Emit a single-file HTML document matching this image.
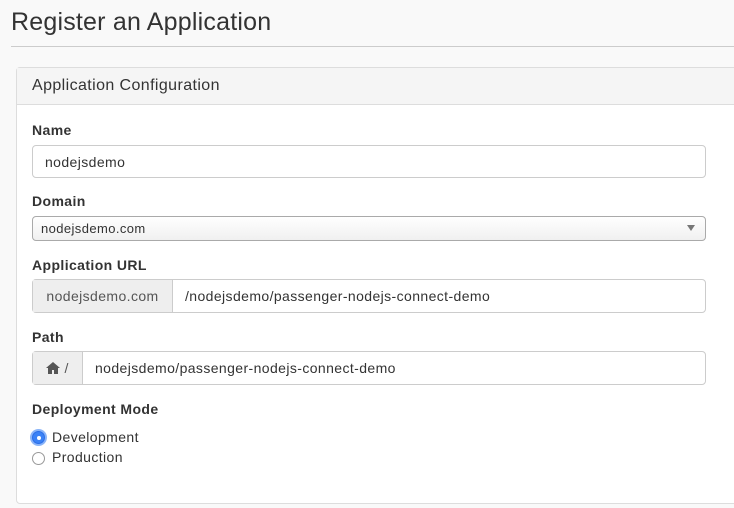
<!DOCTYPE html>
<html><head><style>
*{box-sizing:border-box;margin:0;padding:0}
body{width:734px;height:508px;overflow:hidden;background:#f9f9f9;font-family:"Liberation Sans",sans-serif;color:#333;position:relative;letter-spacing:0.4px}
.abs{position:absolute}
h1{position:absolute;left:11px;top:8px;font-size:25px;font-weight:normal;color:#333;letter-spacing:0.2px}
.rule{left:11px;top:46px;width:723px;height:1px;background:#ccc}
.panel{left:16px;top:67px;width:730px;height:437px;border:1px solid #ddd;border-radius:4px;background:#fff}
.ph{left:17px;top:68px;width:717px;height:37px;background:#f5f5f5;border-bottom:1px solid #ddd;font-size:16px;padding:9px 15px;color:#333}
.lbl{font-size:14px;font-weight:bold;left:32px}
.inp{left:32px;width:674px;border:1px solid #ccc;border-radius:4px;background:#fff;font-size:14px;padding-left:12px;display:flex;align-items:center}
.addon{background:#eee;border-right:1px solid #ccc;height:100%;display:flex;align-items:center;justify-content:center;color:#555}
.radio{left:32px;width:13px;height:13px;border-radius:50%;border:1px solid #999;background:#fff}
.rt{left:52px;font-size:14px}
</style></head><body>
<h1>Register an Application</h1>
<div class="abs rule"></div>
<div class="abs panel"></div>
<div class="abs ph">Application Configuration</div>

<div class="abs lbl" style="top:122px">Name</div>
<div class="abs inp" style="top:145px;height:33px">nodejsdemo</div>

<div class="abs lbl" style="top:193px">Domain</div>
<div class="abs inp" style="top:216px;height:25px;font-size:13px;padding-left:8px;background:linear-gradient(#fff,#f0f0f0);border-color:#aaa">nodejsdemo.com<span style="position:absolute;right:10px;top:8px;width:0;height:0;border-left:4px solid transparent;border-right:4px solid transparent;border-top:6px solid #777"></span></div>

<div class="abs lbl" style="top:257px">Application URL</div>
<div class="abs inp" style="top:279px;height:34px;padding-left:0"><div class="addon" style="width:140px">nodejsdemo.com</div><span style="padding-left:12px">/nodejsdemo/passenger-nodejs-connect-demo</span></div>

<div class="abs lbl" style="top:329px">Path</div>
<div class="abs inp" style="top:351px;height:34px;padding-left:0"><div class="addon" style="width:50px"><svg width="14" height="12" viewBox="0 0 14 12"><path d="M7 0L0 6h2v6h4V8h2v4h4V6h2z" fill="#555"/></svg>&nbsp;/</div><span style="padding-left:12px">nodejsdemo/passenger-nodejs-connect-demo</span></div>

<div class="abs lbl" style="top:401px">Deployment Mode</div>
<div class="abs radio" style="top:431px;background:#3b82f6;border-color:#2a6ee8;box-shadow:0 0 0 2px #8ab4f8"><div style="width:4px;height:4px;background:#fff;border-radius:50%;margin:3.5px auto"></div></div>
<div class="abs rt" style="top:429px">Development</div>
<div class="abs radio" style="top:452px"></div>
<div class="abs rt" style="top:449px">Production</div>
</body></html>
